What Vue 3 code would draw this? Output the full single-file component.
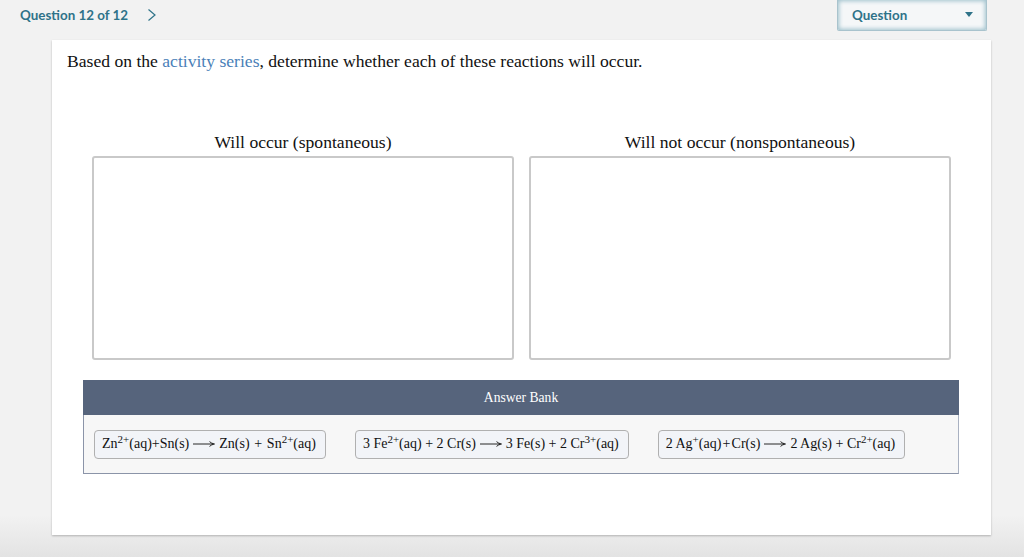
<template>
  <div class="page">
    <header class="topbar">
      <div class="crumb">
        <span class="crumb-text">Question 12 of 12</span>
        <svg class="chevron" width="10" height="14" viewBox="0 0 10 14">
          <path d="M1.5 1.5 L8 7 L1.5 12.5" fill="none" stroke="#2f7389" stroke-width="1.2" />
        </svg>
      </div>
      <div class="select">
        <span>Question</span>
        <span class="caret"></span>
      </div>
    </header>

    <main class="card">
      <p class="prompt">
        Based on the <a class="link">activity series</a>, determine whether each of these reactions will occur.
      </p>

      <div class="bins">
        <section v-for="b in bins" :key="b" class="bin">
          <h4 class="bin-title">{{ b }}</h4>
          <div class="bin-box"></div>
        </section>
      </div>

      <section class="bank">
        <div class="bank-head">Answer Bank</div>
        <div class="bank-body">
          <div v-for="(t, i) in tokens" :key="i" class="token">
            <template v-for="(p, j) in t" :key="j">
              <sup v-if="p.sup">{{ p.sup }}</sup>
              <svg v-else-if="p.arrow" class="arrow" width="22" height="8" viewBox="0 0 22 8">
                <path d="M0 4 H20" stroke="#111" stroke-width="0.9" />
                <path d="M16.5 1.6 Q18.5 3.5 21.5 4 Q18.5 4.5 16.5 6.4" fill="none" stroke="#111" stroke-width="0.9" />
              </svg>
              <span v-else>{{ p.t }}</span>
            </template>
          </div>
        </div>
      </section>
    </main>
  </div>
</template>

<script setup>
const bins = ['Will occur (spontaneous)', 'Will not occur (nonspontaneous)']

const arrow = { arrow: true }
const tokens = [
  [{ t: 'Zn' }, { sup: '2+' }, { t: '(aq)+Sn(s)' }, arrow, { t: 'Zn(s)\u200a + \u200aSn' }, { sup: '2+' }, { t: '(aq)' }],
  [{ t: '3 Fe' }, { sup: '2+' }, { t: '(aq) + 2 Cr(s)' }, arrow, { t: '3 Fe(s) + 2 Cr' }, { sup: '3+' }, { t: '(aq)' }],
  [{ t: '2 Ag' }, { sup: '+' }, { t: '(aq)\u200a+\u200aCr(s)' }, arrow, { t: '2 Ag(s) + Cr' }, { sup: '2+' }, { t: '(aq)' }]
]
</script>

<style>
html, body {
  margin: 0;
  background: #f2f2f2;
}
</style>

<style scoped>
.page {
  width: 1024px;
  height: 557px;
  overflow: hidden;
  box-sizing: border-box;
  background: linear-gradient(to bottom, #f2f2f2 0, #f2f2f2 515px, #e3e3e3 557px);
  font-family: "Liberation Serif", serif;
  color: #111;
}
.topbar {
  height: 40px;
  display: flex;
  justify-content: space-between;
  align-items: flex-start;
  padding: 0 37px 0 20px;
  box-sizing: border-box;
}
.crumb {
  display: flex;
  align-items: center;
  gap: 19px;
  height: 30px;
}
.crumb-text, .select {
  font-family: Lato, sans-serif;
  font-size: 13.4px;
  font-weight: 700;
  color: #2f7389;
}
.select {
  width: 150px;
  height: 31px;
  box-sizing: border-box;
  display: flex;
  align-items: center;
  justify-content: space-between;
  padding: 0 13px 1px 14px;
  background: #f5f7f8;
  border: 1px solid #a9c3cd;
  border-top: none;
  border-radius: 0 0 2px 2px;
  box-shadow: inset 0 0 4px 1px #9dc0cc;
}
.caret {
  width: 0;
  height: 0;
  border-left: 4.5px solid transparent;
  border-right: 4.5px solid transparent;
  border-top: 5px solid #2f7389;
}
.card {
  width: 939px;
  height: 495px;
  margin-left: 52px;
  box-sizing: border-box;
  padding: 10px 32px 0 31px;
  background: #fff;
  box-shadow: 0 1px 2px rgba(0, 0, 0, 0.25);
}
.prompt {
  margin: 0 0 0 -16px;
  font-size: 17.6px;
  line-height: 22px;
}
.link {
  color: #4a7fb8;
}
.bins {
  display: flex;
  justify-content: space-between;
  padding: 0 8px 0 9px;
  margin-top: 59px;
}
.bin {
  width: 422px;
}
.bin-title {
  margin: 0 0 3px;
  font-size: 17.6px;
  font-weight: 400;
  line-height: 22px;
  text-align: center;
}
.bin-box {
  height: 204px;
  box-sizing: border-box;
  border: 2px solid #c9c9c9;
  border-radius: 3px;
}
.bank {
  margin-top: 20px;
  border-right: 1px solid #a9b1c1;
  border-bottom: 1px solid #8b94a8;
  border-left: 1px solid #8b94a8;
}
.bank-head {
  height: 35px;
  margin: 0 -1px;
  background: #56647c;
  color: #fff;
  font-size: 13.6px;
  line-height: 35px;
  text-align: center;
}
.bank-body {
  height: 58px;
  box-sizing: border-box;
  display: flex;
  align-items: center;
  gap: 29px;
  padding: 0 10px;
  background: #f7f7f7;
}
.token {
  height: 29px;
  box-sizing: border-box;
  display: flex;
  align-items: center;
  padding: 0 9px 0 7px;
  background: #f2f4f8;
  border: 1px solid #b0b0b0;
  border-radius: 4px;
  font-size: 14px;
  white-space: pre;
}
.token sup {
  font-size: 11px;
  line-height: 1;
  position: relative;
  top: -5px;
  vertical-align: baseline;
}
.arrow {
  margin: 0 4px;
}
</style>
